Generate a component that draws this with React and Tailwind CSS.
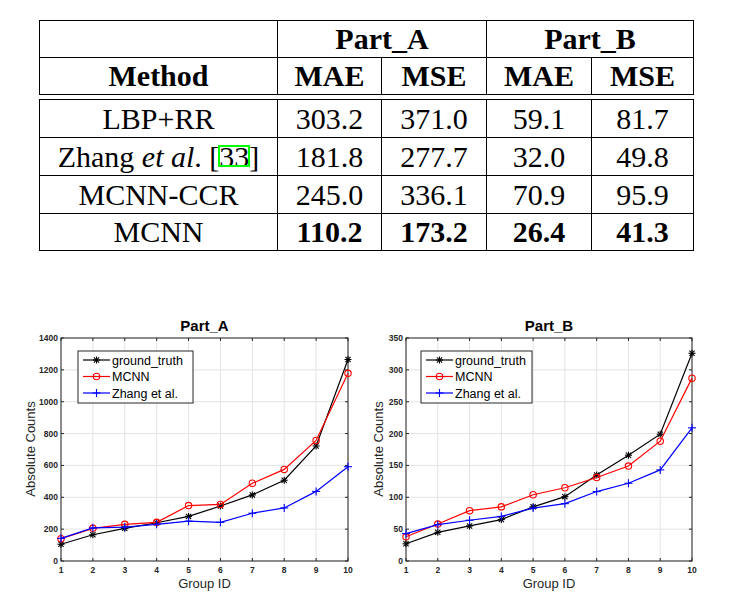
import React from "react";

const serif = { fontFamily: '"Liberation Serif", "Times New Roman", serif' };
const SANS = '"Liberation Sans", Arial, sans-serif';

const W = ["w-[237px]", "w-[104px] border-l border-black", "w-[105px] border-l border-black", "w-[105px] border-l border-black", "w-[102px] border-l border-black"];
const W1 = ["w-[237px]", "w-[209px] border-l border-black", "w-[207px] border-l border-black"];

function Row({ cells, widths = W, h = "h-[37px]", bold = [], top = false }) {
  return (
    <div className={`flex ${top ? "" : "border-t border-black"}`}>
      {cells.map((c, i) => (
        <div key={i} className={`${widths[i]} ${h} flex items-center justify-center ${bold.includes(i) ? "font-bold" : ""}`}>
          {c}
        </div>
      ))}
    </div>
  );
}

const datasets = {
  A: {
    gt: [105, 165, 205, 240, 280, 345, 415, 507, 722, 1265],
    mcnn: [140, 205, 230, 243, 348, 355, 488, 575, 757, 1178],
    zhang: [142, 208, 213, 230, 250, 243, 300, 333, 437, 592],
  },
  B: {
    gt: [27, 45, 55, 65, 85, 101, 135, 166, 199, 326],
    mcnn: [38, 58, 79, 85, 104, 115, 131, 149, 188, 287],
    zhang: [43, 57, 64, 70, 83, 90, 109, 122, 143, 209],
  },
};

function Marker({ type, x, y, color }) {
  if (type === "star") {
    return (
      <g stroke={color} strokeWidth="1.1">
        <line x1={x - 3.5} y1={y} x2={x + 3.5} y2={y} />
        <line x1={x} y1={y - 3.5} x2={x} y2={y + 3.5} />
        <line x1={x - 2.6} y1={y - 2.6} x2={x + 2.6} y2={y + 2.6} />
        <line x1={x - 2.6} y1={y + 2.6} x2={x + 2.6} y2={y - 2.6} />
      </g>
    );
  }
  if (type === "circle") {
    return <circle cx={x} cy={y} r="3.2" fill="none" stroke={color} strokeWidth="1.1" />;
  }
  return (
    <g stroke={color} strokeWidth="1.1">
      <line x1={x - 4} y1={y} x2={x + 4} y2={y} />
      <line x1={x} y1={y - 4} x2={x} y2={y + 4} />
    </g>
  );
}

function Chart({ title, data, ymax, ystep, axL, axR, labelX, legendX, legendW }) {
  const top = 28;
  const bot = 251;
  const xs = (i) => axL + (i * (axR - axL)) / 9;
  const ys = (v) => bot - (v / ymax) * (bot - top);
  const yt = [];
  for (let v = 0; v <= ymax; v += ystep) yt.push(v);
  const series = [
    { key: "gt", color: "#000000", m: "star", label: "ground_truth" },
    { key: "mcnn", color: "#ff0000", m: "circle", label: "MCNN" },
    { key: "zhang", color: "#0000ff", m: "plus", label: "Zhang et al." },
  ];
  const cx = (axL + axR) / 2;
  return (
    <svg width="366" height="292" viewBox="0 0 366 292" className="block shrink-0">
      <text x={cx} y="21" textAnchor="middle" fontFamily={SANS} fontWeight="700" fontSize="15" fill="#000">
        {title}
      </text>
      {Array.from({ length: 10 }).map((_, i) => (
        <line key={"gx" + i} x1={xs(i)} y1={top} x2={xs(i)} y2={bot} stroke="#e3e3e3" strokeWidth="1" />
      ))}
      {yt.map((v) => (
        <line key={"gy" + v} x1={axL} y1={ys(v)} x2={axR} y2={ys(v)} stroke="#e3e3e3" strokeWidth="1" />
      ))}
      {Array.from({ length: 10 }).map((_, i) => (
        <g key={"tx" + i} stroke="#262626" strokeWidth="1">
          <line x1={xs(i)} y1={bot} x2={xs(i)} y2={bot - 3} />
          <line x1={xs(i)} y1={top} x2={xs(i)} y2={top + 3} />
        </g>
      ))}
      {yt.map((v) => (
        <g key={"ty" + v} stroke="#262626" strokeWidth="1">
          <line x1={axL} y1={ys(v)} x2={axL + 3} y2={ys(v)} />
          <line x1={axR} y1={ys(v)} x2={axR - 3} y2={ys(v)} />
        </g>
      ))}
      <rect x={axL} y={top} width={axR - axL} height={bot - top} fill="none" stroke="#262626" strokeWidth="1" />
      {Array.from({ length: 10 }).map((_, i) => (
        <text key={"lx" + i} x={xs(i)} y="263" textAnchor="middle" fontFamily={SANS} fontSize="8.5" fontWeight="600" fill="#262626">
          {i + 1}
        </text>
      ))}
      {yt.map((v) => (
        <text key={"ly" + v} x={axL - 3} y={ys(v) + 3} textAnchor="end" fontFamily={SANS} fontSize="8.5" fontWeight="600" fill="#262626">
          {v}
        </text>
      ))}
      <text x={cx} y="278" textAnchor="middle" fontFamily={SANS} fontSize="13" fill="#262626">
        Group ID
      </text>
      <text
        x="0"
        y="0"
        transform={`translate(${labelX} 139) rotate(-90)`}
        textAnchor="middle"
        fontFamily={SANS}
        fontSize="13"
        fill="#262626"
      >
        Absolute Counts
      </text>
      {series.map((s) => (
        <g key={s.key}>
          <polyline
            points={data[s.key].map((v, i) => `${xs(i)},${ys(v)}`).join(" ")}
            fill="none"
            stroke={s.color}
            strokeWidth="1.2"
          />
          {data[s.key].map((v, i) => (
            <Marker key={i} type={s.m} x={xs(i)} y={ys(v)} color={s.color} />
          ))}
        </g>
      ))}
      <rect x={legendX} y="41" width={legendW} height="52" fill="#fff" stroke="#262626" strokeWidth="1" />
      {series.map((s, k) => {
        const ly = 50 + k * 16.5;
        return (
          <g key={"lg" + s.key}>
            <line x1={legendX + 5} y1={ly} x2={legendX + 32} y2={ly} stroke={s.color} strokeWidth="1.2" />
            <Marker type={s.m} x={legendX + 18.5} y={ly} color={s.color} />
            <text x={legendX + 34} y={ly + 4.5} fontFamily={SANS} fontSize="12.5" fill="#000">
              {s.label}
            </text>
          </g>
        );
      })}
    </svg>
  );
}

const zhang = (
  <span>
    Zhang <i>et al</i>. [
    <span className="relative">
      33
      <span className="absolute left-[-1px] right-[-1px] top-[5px] h-[22px] border-2 border-[#00ff00]" />
    </span>
    ]
  </span>
);

export default function App() {
  return (
    <div className="w-[732px] h-[602px] bg-white overflow-hidden">
      <div className="pt-[20px] pl-[39px] text-[30px] leading-none text-black" style={serif}>
        <div className="w-[655px] border border-black">
          <Row top widths={W1} cells={["", "Part_A", "Part_B"]} h="h-[36px]" bold={[1, 2]} />
          <Row cells={["Method", "MAE", "MSE", "MAE", "MSE"]} h="h-[36px]" bold={[0, 1, 2, 3, 4]} />
        </div>
        <div className="w-[655px] border border-black mt-[4px]">
          <Row top cells={["LBP+RR", "303.2", "371.0", "59.1", "81.7"]} />
          <Row cells={[zhang, "181.8", "277.7", "32.0", "49.8"]} />
          <Row cells={["MCNN-CCR", "245.0", "336.1", "70.9", "95.9"]} />
          <Row cells={["MCNN", "110.2", "173.2", "26.4", "41.3"]} h="h-[36px]" bold={[1, 2, 3, 4]} />
        </div>
      </div>
      <div className="flex mt-[59px]">
        <Chart title="Part_A" data={datasets.A} ymax={1400} ystep={200} axL={61} axR={348} labelX={35} legendX={78} legendW={115} />
        <Chart title="Part_B" data={datasets.B} ymax={350} ystep={50} axL={40} axR={326} labelX={17} legendX={55} legendW={111} />
      </div>
    </div>
  );
}
